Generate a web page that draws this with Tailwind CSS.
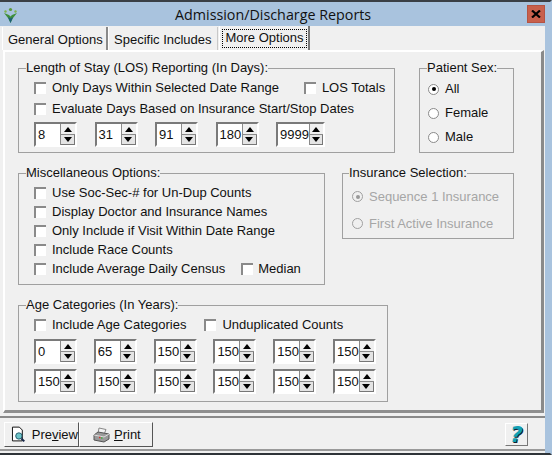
<!DOCTYPE html>
<html>
<head>
  <meta charset="UTF-8">
  <title>Admission/Discharge Reports</title>
  <script src="https://cdn.jsdelivr.net/npm/@tailwindcss/browser@4"></script>
</head>
<body class="w-[552px] h-[455px] overflow-hidden bg-[#a9c3de] font-['Liberation_Sans',Arial,sans-serif] text-[13px] text-[#111]">
  <div class="h-[455px] flex flex-col border-t-2 border-t-[#3a3f45] border-b-2 border-b-[#2f3438] border-r-[2px] border-r-[#a9c3de]">

    <!-- title bar -->
    <div class="h-[24px] flex items-center relative shrink-0">
      <svg class="ml-[3px] mt-[2px] w-[15px] h-[16px]" viewBox="0 0 15 16">
        <circle cx="7.5" cy="2.5" r="1.6" fill="#5c9a3a"/>
        <circle cx="2.5" cy="4.5" r="1.2" fill="#7fb24a"/>
        <circle cx="12.5" cy="4.5" r="1.2" fill="#7fb24a"/>
        <path d="M1 6l5 2 1.5 1.5L9 8l5-2-4 5-2.5 5L5 11z" fill="#3f8f3a"/>
        <path d="M5 10l2.5 1.5L10 10l-2.500 6z" fill="#1c5f78"/>
      </svg>
      <span class="absolute left-[175px] top-[2px] font-['Open_Sans',sans-serif] text-[14.3px] leading-[22px] text-[#111]">Admission/Discharge Reports</span>
      <div class="absolute left-[527px] top-[3px] w-[18px] h-[18px] bg-[#c8604c] border border-[#b55343] flex items-center justify-center">
        <svg class="w-[10px] h-[8px]" viewBox="0 0 10 8"><path d="M1 0.5l8 7M9 0.5l-8 7" stroke="#000" stroke-width="2.2"/></svg>
      </div>
    </div>

    <div class="flex-1 flex flex-col bg-[#f0f0f0] mr-[5px]">
      <!-- tabs -->
      <div class="h-[24px] flex items-end pl-[2px] shrink-0">
        <div class="h-[23px] w-[106px] border-l border-l-white border-r-2 border-r-[#8a8a8a] flex items-center pl-[5px] pt-[2px]">General Options</div>
        <div class="h-[23px] w-[110px] border-l border-l-white border-r border-r-[#c8c8c8] flex items-center pl-[5px] pt-[2px]">Specific Includes</div>
        <div class="ml-[1px] h-[24px] w-[91px] border-l border-l-white border-r-2 border-r-[#777] pl-[2px] pt-[3px] pb-[2px]">
          <div class="h-full w-[85px] border border-dotted border-black flex items-center justify-center pb-[2px]">More Options</div>
        </div>
      </div>

      <!-- tab page -->
      <div class="h-[363px] w-[541px] ml-[3px] shrink-0 border-t-2 border-t-white border-l-2 border-l-white border-r-[3px] border-r-double border-r-[#8a8a8a] border-b-[3px] border-b-[#8f8f8f] pl-[13px] pt-[8px]">
        <!-- row 1 -->
        <div class="flex items-start">
          <fieldset class="w-[377px] h-[93px] border border-[#a0a0a0] pl-[15px]">
            <legend class="ml-[-8px] h-[16px] leading-[16px]">Length of Stay (LOS) Reporting (In Days):</legend>
            <div class="h-[20px] mt-[2px] flex items-center">
              <span class="w-[12px] h-[12px] bg-white border-t-2 border-l-2 border-[#8a8a8a] mr-[6px]"></span>Only Days Within Selected Date Range
              <span class="ml-[25px] w-[12px] h-[12px] bg-white border-t-2 border-l-2 border-[#8a8a8a] mr-[6px]"></span>LOS Totals
            </div>
            <div class="h-[21px] flex items-center">
              <span class="w-[12px] h-[12px] bg-white border-t-2 border-l-2 border-[#8a8a8a] mr-[6px]"></span>Evaluate Days Based on Insurance Start/Stop Dates
            </div>
            <div class="flex mt-[3px] gap-x-[17.5px]">
              <div class="flex w-[43px] h-[25px] bg-white border-2 border-t-[#7a7a7a] border-l-[#7a7a7a] border-r-[#fff] border-b-[#fff]"><span class="flex-1 pl-[2px] leading-[21px]">8</span><div class="w-[15px] flex flex-col border-l border-[#8a8a8a]"><span class="h-[11px] flex items-center justify-center bg-[#f0f0f0] border-b border-[#8a8a8a]"><i class="border-x-[4px] border-x-transparent border-b-[5px] border-b-black"></i></span><span class="flex-1 flex items-center justify-center bg-[#e4e4e4] border-b border-r border-[#777]"><i class="border-x-[4px] border-x-transparent border-t-[5px] border-t-black"></i></span></div></div>
              <div class="flex w-[43px] h-[25px] bg-white border-2 border-t-[#7a7a7a] border-l-[#7a7a7a] border-r-[#fff] border-b-[#fff]"><span class="flex-1 pl-[2px] leading-[21px]">31</span><div class="w-[15px] flex flex-col border-l border-[#8a8a8a]"><span class="h-[11px] flex items-center justify-center bg-[#f0f0f0] border-b border-[#8a8a8a]"><i class="border-x-[4px] border-x-transparent border-b-[5px] border-b-black"></i></span><span class="flex-1 flex items-center justify-center bg-[#e4e4e4] border-b border-r border-[#777]"><i class="border-x-[4px] border-x-transparent border-t-[5px] border-t-black"></i></span></div></div>
              <div class="flex w-[43px] h-[25px] bg-white border-2 border-t-[#7a7a7a] border-l-[#7a7a7a] border-r-[#fff] border-b-[#fff]"><span class="flex-1 pl-[2px] leading-[21px]">91</span><div class="w-[15px] flex flex-col border-l border-[#8a8a8a]"><span class="h-[11px] flex items-center justify-center bg-[#f0f0f0] border-b border-[#8a8a8a]"><i class="border-x-[4px] border-x-transparent border-b-[5px] border-b-black"></i></span><span class="flex-1 flex items-center justify-center bg-[#e4e4e4] border-b border-r border-[#777]"><i class="border-x-[4px] border-x-transparent border-t-[5px] border-t-black"></i></span></div></div>
              <div class="flex w-[43px] h-[25px] bg-white border-2 border-t-[#7a7a7a] border-l-[#7a7a7a] border-r-[#fff] border-b-[#fff]"><span class="flex-1 pl-[2px] leading-[21px]">180</span><div class="w-[15px] flex flex-col border-l border-[#8a8a8a]"><span class="h-[11px] flex items-center justify-center bg-[#f0f0f0] border-b border-[#8a8a8a]"><i class="border-x-[4px] border-x-transparent border-b-[5px] border-b-black"></i></span><span class="flex-1 flex items-center justify-center bg-[#e4e4e4] border-b border-r border-[#777]"><i class="border-x-[4px] border-x-transparent border-t-[5px] border-t-black"></i></span></div></div>
              <div class="flex w-[49px] h-[25px] bg-white border-2 border-t-[#7a7a7a] border-l-[#7a7a7a] border-r-[#fff] border-b-[#fff]"><span class="flex-1 pl-[2px] leading-[21px]">9999</span><div class="w-[15px] flex flex-col border-l border-[#8a8a8a]"><span class="h-[11px] flex items-center justify-center bg-[#f0f0f0] border-b border-[#8a8a8a]"><i class="border-x-[4px] border-x-transparent border-b-[5px] border-b-black"></i></span><span class="flex-1 flex items-center justify-center bg-[#e4e4e4] border-b border-r border-[#777]"><i class="border-x-[4px] border-x-transparent border-t-[5px] border-t-black"></i></span></div></div>
            </div>
          </fieldset>
          <fieldset class="ml-[24px] w-[95px] h-[93px] border border-[#a0a0a0] pl-[8px]">
            <legend class="ml-[-1px] h-[16px] leading-[16px]">Patient Sex:</legend>
            <div class="h-[24px] mt-[1px] flex items-center"><span class="w-[11px] h-[11px] rounded-full bg-white border border-[#8a8a8a] mr-[6px] flex items-center justify-center"><i class="w-[4px] h-[4px] rounded-full bg-black"></i></span>All</div>
            <div class="h-[24px] flex items-center"><span class="w-[11px] h-[11px] rounded-full bg-white border border-[#8a8a8a] mr-[6px]"></span>Female</div>
            <div class="h-[24px] flex items-center"><span class="w-[11px] h-[11px] rounded-full bg-white border border-[#8a8a8a] mr-[6px]"></span>Male</div>
          </fieldset>
        </div>

        <!-- row 2 -->
        <div class="flex items-start mt-[12px]">
          <fieldset class="w-[307px] h-[120px] border border-[#a0a0a0] pl-[15px]">
            <legend class="ml-[-8px] h-[16px] leading-[16px]">Miscellaneous Options:</legend>
            <div class="h-[19px] mt-[2px] flex items-center"><span class="w-[12px] h-[12px] bg-white border-t-2 border-l-2 border-[#8a8a8a] mr-[6px]"></span>Use Soc-Sec-# for Un-Dup Counts</div>
            <div class="h-[19px] flex items-center"><span class="w-[12px] h-[12px] bg-white border-t-2 border-l-2 border-[#8a8a8a] mr-[6px]"></span>Display Doctor and Insurance Names</div>
            <div class="h-[19px] flex items-center"><span class="w-[12px] h-[12px] bg-white border-t-2 border-l-2 border-[#8a8a8a] mr-[6px]"></span>Only Include if Visit Within Date Range</div>
            <div class="h-[19px] flex items-center"><span class="w-[12px] h-[12px] bg-white border-t-2 border-l-2 border-[#8a8a8a] mr-[6px]"></span>Include Race Counts</div>
            <div class="h-[19px] flex items-center"><span class="w-[12px] h-[12px] bg-white border-t-2 border-l-2 border-[#8a8a8a] mr-[6px]"></span>Include Average Daily Census<span class="ml-[16px] w-[12px] h-[12px] bg-white border-t-2 border-l-2 border-[#8a8a8a] mr-[5px]"></span>Median</div>
          </fieldset>
          <fieldset class="ml-[17px] w-[172px] h-[74px] border border-[#a0a0a0] pl-[9px] text-[#a6a6a6]">
            <legend class="ml-[-3px] h-[16px] leading-[16px] text-[#111]">Insurance Selection:</legend>
            <div class="h-[25px] mt-[3px] flex items-center"><span class="w-[11px] h-[11px] rounded-full bg-[#f0f0f0] border border-[#a0a0a0] mr-[6px] flex items-center justify-center"><i class="w-[4px] h-[4px] rounded-full bg-[#999]"></i></span>Sequence 1 Insurance</div>
            <div class="h-[29px] flex items-center"><span class="w-[11px] h-[11px] rounded-full bg-[#f0f0f0] border border-[#a0a0a0] mr-[6px]"></span>First Active Insurance</div>
          </fieldset>
        </div>

        <!-- row 3 -->
        <fieldset class="mt-[12px] w-[370px] h-[105px] border border-[#a0a0a0] pl-[15px]">
          <legend class="ml-[-8px] h-[16px] leading-[16px]">Age Categories (In Years):</legend>
          <div class="h-[20px] mt-[2px] flex items-center"><span class="w-[12px] h-[12px] bg-white border-t-2 border-l-2 border-[#8a8a8a] mr-[6px]"></span>Include Age Categories<span class="ml-[18px] w-[12px] h-[12px] bg-white border-t-2 border-l-2 border-[#8a8a8a] mr-[6px]"></span>Unduplicated Counts</div>
          <div class="grid grid-cols-[repeat(6,43px)] gap-x-[16.8px] gap-y-[5px] mt-[4px]">
            <div class="flex h-[25px] bg-white border-2 border-t-[#7a7a7a] border-l-[#7a7a7a] border-r-[#fff] border-b-[#fff]"><span class="flex-1 pl-[2px] leading-[21px]">0</span><div class="w-[15px] flex flex-col border-l border-[#8a8a8a]"><span class="h-[11px] flex items-center justify-center bg-[#f0f0f0] border-b border-[#8a8a8a]"><i class="border-x-[4px] border-x-transparent border-b-[5px] border-b-black"></i></span><span class="flex-1 flex items-center justify-center bg-[#e4e4e4] border-b border-r border-[#777]"><i class="border-x-[4px] border-x-transparent border-t-[5px] border-t-black"></i></span></div></div>
            <div class="flex h-[25px] bg-white border-2 border-t-[#7a7a7a] border-l-[#7a7a7a] border-r-[#fff] border-b-[#fff]"><span class="flex-1 pl-[2px] leading-[21px]">65</span><div class="w-[15px] flex flex-col border-l border-[#8a8a8a]"><span class="h-[11px] flex items-center justify-center bg-[#f0f0f0] border-b border-[#8a8a8a]"><i class="border-x-[4px] border-x-transparent border-b-[5px] border-b-black"></i></span><span class="flex-1 flex items-center justify-center bg-[#e4e4e4] border-b border-r border-[#777]"><i class="border-x-[4px] border-x-transparent border-t-[5px] border-t-black"></i></span></div></div>
            <div class="flex h-[25px] bg-white border-2 border-t-[#7a7a7a] border-l-[#7a7a7a] border-r-[#fff] border-b-[#fff]"><span class="flex-1 pl-[2px] leading-[21px]">150</span><div class="w-[15px] flex flex-col border-l border-[#8a8a8a]"><span class="h-[11px] flex items-center justify-center bg-[#f0f0f0] border-b border-[#8a8a8a]"><i class="border-x-[4px] border-x-transparent border-b-[5px] border-b-black"></i></span><span class="flex-1 flex items-center justify-center bg-[#e4e4e4] border-b border-r border-[#777]"><i class="border-x-[4px] border-x-transparent border-t-[5px] border-t-black"></i></span></div></div>
            <div class="flex h-[25px] bg-white border-2 border-t-[#7a7a7a] border-l-[#7a7a7a] border-r-[#fff] border-b-[#fff]"><span class="flex-1 pl-[2px] leading-[21px]">150</span><div class="w-[15px] flex flex-col border-l border-[#8a8a8a]"><span class="h-[11px] flex items-center justify-center bg-[#f0f0f0] border-b border-[#8a8a8a]"><i class="border-x-[4px] border-x-transparent border-b-[5px] border-b-black"></i></span><span class="flex-1 flex items-center justify-center bg-[#e4e4e4] border-b border-r border-[#777]"><i class="border-x-[4px] border-x-transparent border-t-[5px] border-t-black"></i></span></div></div>
            <div class="flex h-[25px] bg-white border-2 border-t-[#7a7a7a] border-l-[#7a7a7a] border-r-[#fff] border-b-[#fff]"><span class="flex-1 pl-[2px] leading-[21px]">150</span><div class="w-[15px] flex flex-col border-l border-[#8a8a8a]"><span class="h-[11px] flex items-center justify-center bg-[#f0f0f0] border-b border-[#8a8a8a]"><i class="border-x-[4px] border-x-transparent border-b-[5px] border-b-black"></i></span><span class="flex-1 flex items-center justify-center bg-[#e4e4e4] border-b border-r border-[#777]"><i class="border-x-[4px] border-x-transparent border-t-[5px] border-t-black"></i></span></div></div>
            <div class="flex h-[25px] bg-white border-2 border-t-[#7a7a7a] border-l-[#7a7a7a] border-r-[#fff] border-b-[#fff]"><span class="flex-1 pl-[2px] leading-[21px]">150</span><div class="w-[15px] flex flex-col border-l border-[#8a8a8a]"><span class="h-[11px] flex items-center justify-center bg-[#f0f0f0] border-b border-[#8a8a8a]"><i class="border-x-[4px] border-x-transparent border-b-[5px] border-b-black"></i></span><span class="flex-1 flex items-center justify-center bg-[#e4e4e4] border-b border-r border-[#777]"><i class="border-x-[4px] border-x-transparent border-t-[5px] border-t-black"></i></span></div></div>
            <div class="flex h-[25px] bg-white border-2 border-t-[#7a7a7a] border-l-[#7a7a7a] border-r-[#fff] border-b-[#fff]"><span class="flex-1 pl-[2px] leading-[21px]">150</span><div class="w-[15px] flex flex-col border-l border-[#8a8a8a]"><span class="h-[11px] flex items-center justify-center bg-[#f0f0f0] border-b border-[#8a8a8a]"><i class="border-x-[4px] border-x-transparent border-b-[5px] border-b-black"></i></span><span class="flex-1 flex items-center justify-center bg-[#e4e4e4] border-b border-r border-[#777]"><i class="border-x-[4px] border-x-transparent border-t-[5px] border-t-black"></i></span></div></div>
            <div class="flex h-[25px] bg-white border-2 border-t-[#7a7a7a] border-l-[#7a7a7a] border-r-[#fff] border-b-[#fff]"><span class="flex-1 pl-[2px] leading-[21px]">150</span><div class="w-[15px] flex flex-col border-l border-[#8a8a8a]"><span class="h-[11px] flex items-center justify-center bg-[#f0f0f0] border-b border-[#8a8a8a]"><i class="border-x-[4px] border-x-transparent border-b-[5px] border-b-black"></i></span><span class="flex-1 flex items-center justify-center bg-[#e4e4e4] border-b border-r border-[#777]"><i class="border-x-[4px] border-x-transparent border-t-[5px] border-t-black"></i></span></div></div>
            <div class="flex h-[25px] bg-white border-2 border-t-[#7a7a7a] border-l-[#7a7a7a] border-r-[#fff] border-b-[#fff]"><span class="flex-1 pl-[2px] leading-[21px]">150</span><div class="w-[15px] flex flex-col border-l border-[#8a8a8a]"><span class="h-[11px] flex items-center justify-center bg-[#f0f0f0] border-b border-[#8a8a8a]"><i class="border-x-[4px] border-x-transparent border-b-[5px] border-b-black"></i></span><span class="flex-1 flex items-center justify-center bg-[#e4e4e4] border-b border-r border-[#777]"><i class="border-x-[4px] border-x-transparent border-t-[5px] border-t-black"></i></span></div></div>
            <div class="flex h-[25px] bg-white border-2 border-t-[#7a7a7a] border-l-[#7a7a7a] border-r-[#fff] border-b-[#fff]"><span class="flex-1 pl-[2px] leading-[21px]">150</span><div class="w-[15px] flex flex-col border-l border-[#8a8a8a]"><span class="h-[11px] flex items-center justify-center bg-[#f0f0f0] border-b border-[#8a8a8a]"><i class="border-x-[4px] border-x-transparent border-b-[5px] border-b-black"></i></span><span class="flex-1 flex items-center justify-center bg-[#e4e4e4] border-b border-r border-[#777]"><i class="border-x-[4px] border-x-transparent border-t-[5px] border-t-black"></i></span></div></div>
            <div class="flex h-[25px] bg-white border-2 border-t-[#7a7a7a] border-l-[#7a7a7a] border-r-[#fff] border-b-[#fff]"><span class="flex-1 pl-[2px] leading-[21px]">150</span><div class="w-[15px] flex flex-col border-l border-[#8a8a8a]"><span class="h-[11px] flex items-center justify-center bg-[#f0f0f0] border-b border-[#8a8a8a]"><i class="border-x-[4px] border-x-transparent border-b-[5px] border-b-black"></i></span><span class="flex-1 flex items-center justify-center bg-[#e4e4e4] border-b border-r border-[#777]"><i class="border-x-[4px] border-x-transparent border-t-[5px] border-t-black"></i></span></div></div>
            <div class="flex h-[25px] bg-white border-2 border-t-[#7a7a7a] border-l-[#7a7a7a] border-r-[#fff] border-b-[#fff]"><span class="flex-1 pl-[2px] leading-[21px]">150</span><div class="w-[15px] flex flex-col border-l border-[#8a8a8a]"><span class="h-[11px] flex items-center justify-center bg-[#f0f0f0] border-b border-[#8a8a8a]"><i class="border-x-[4px] border-x-transparent border-b-[5px] border-b-black"></i></span><span class="flex-1 flex items-center justify-center bg-[#e4e4e4] border-b border-r border-[#777]"><i class="border-x-[4px] border-x-transparent border-t-[5px] border-t-black"></i></span></div></div>
          </div>
        </fieldset>
      </div>

      <!-- bottom toolbar -->
      <div class="flex-1 flex items-start mt-[3px] border-t-2 border-t-[#8a8a8a] border-b-2 border-b-[#9a9a9a] pl-[4px] pr-[17px] pt-[4px]">
        <div class="w-[75px] h-[25px] border border-t-white border-l-white border-r-[#555] border-b-[#555] flex items-center pl-[5px] gap-[5px]">
          <svg class="w-[17px] h-[17px]" viewBox="0 0 17 17">
            <path d="M2.5 1h7l3 3v11h-10z" fill="#fff" stroke="#111"/>
            <circle cx="9" cy="10" r="3.2" fill="#6cc4c8" stroke="#2a6070"/>
            <path d="M11.5 12.5l3 3" stroke="#1a2a4a" stroke-width="2"/>
          </svg>
          <span>Pre<u>v</u>iew</span>
        </div>
        <div class="w-[74px] h-[25px] border border-t-white border-l-white border-r-[#555] border-b-[#555] flex items-center pl-[13px] gap-[4px]">
          <svg class="w-[17px] h-[16px]" viewBox="0 0 17 16">
            <path d="M6 1l7 1.500-2 5-6-1z" fill="#f4f4f4" stroke="#888"/>
            <path d="M1 8l4-3 11 2v5l-5 3-10-2z" fill="#9a9a9a" stroke="#555"/>
            <path d="M1 8l10 2 5-3" fill="none" stroke="#ddd"/>
            <path d="M6 10.500h1.500" stroke="#d8332a" stroke-width="1.500"/>
            <path d="M8 11h1.500" stroke="#3cb043" stroke-width="1.500"/>
          </svg>
          <span><u>P</u>rint</span>
        </div>
        <div class="ml-auto w-[23px] h-[23px] mt-[1px] border border-t-white border-l-white border-r-[#777] border-b-[#777] flex items-center justify-center font-['DejaVu_Sans',sans-serif] font-bold italic text-[22px] leading-none text-[#12a0b4] [text-shadow:1px_1px_0_#123]">?</div>
      </div>
      <div class="h-[2px] bg-[#f0f0f0]"></div>
    </div>
  </div>
</body>
</html>
